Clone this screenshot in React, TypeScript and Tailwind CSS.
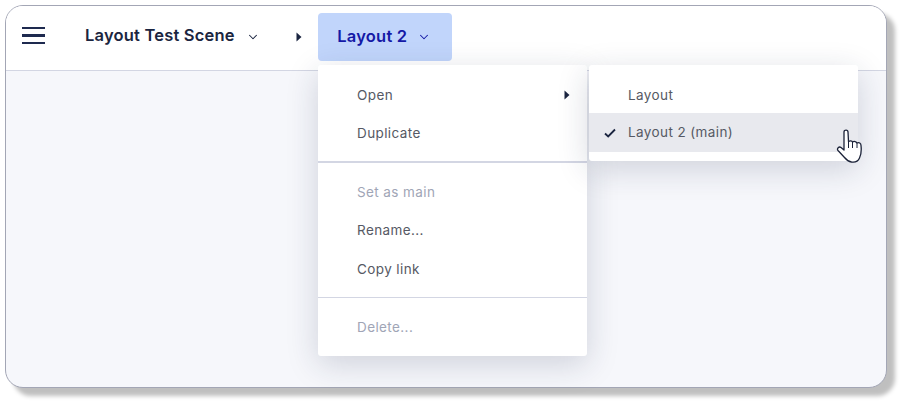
import { ChevronDown } from "lucide-react";

const font = { fontFamily: "Inter, 'Noto Sans', sans-serif" };

function Caret({ className }: { className: string }) {
  return (
    <svg width="6" height="10" viewBox="0 0 6 10" className={className}>
      <path d="M0.5 0.5 L5.5 5 L0.5 9.5 Z" fill="currentColor" />
    </svg>
  );
}

function Item({
  label,
  disabled,
  height = "h-[38px]",
  children,
}: {
  label: string;
  disabled?: boolean;
  height?: string;
  children?: React.ReactNode;
}) {
  return (
    <div
      className={
        "flex items-center justify-between pl-[39px] pr-[17px] text-[13.5px] tracking-[0.4px] " +
        height +
        " " +
        (disabled ? "text-[#a0a5b6]" : "text-[#565964]")
      }
    >
      <span>{label}</span>
      {children}
    </div>
  );
}

function HandCursor() {
  return (
    <svg width="26" height="36" viewBox="0 0 26 36" className="absolute left-[836px] top-[128px]">
      <path
        d="M8 4C8 1.500 12 1.500 12 4L12.500 13.500C14 12.500 16 12.500 16.500 14C18 13 20.500 13.500 21 15C23 14 25 15 25 17.500C25.500 22 25 27 23.500 30C22 33.500 19 34.500 15.500 34C12.500 33.500 10.500 32 8.500 29.500L2 22.500C.5 20.500 3 18 5 19.500L8 22Z"
        fill="#fff"
        stroke="#1b2238"
        strokeWidth="1.300"
        strokeLinejoin="round"
      />
      <path d="M12.500 13.500V20M16.500 14V20M21 15V20" stroke="#1b2238" strokeWidth="1" fill="none" />
    </svg>
  );
}

export default function App() {
  return (
    <div className="relative h-[403px] w-[902px] overflow-hidden bg-white pl-[5px] pt-[5px]" style={font}>
      <div className="flex h-[383px] w-[882px] flex-col overflow-hidden rounded-[18px] border border-[#a3a6b5] bg-[#f6f7fb] shadow-[8px_8px_4px_rgba(0,0,0,0.25)]">
        <header className="flex h-[65px] shrink-0 items-center border-b border-[#d3d6e3] bg-white pb-[2px]">
          <div className="mb-[3px] ml-[16px] flex w-[23px] flex-col gap-[5px]">
            <div className="h-[2.500px] bg-[#1e2a4f]" />
            <div className="h-[2.500px] bg-[#1e2a4f]" />
            <div className="h-[2.500px] bg-[#1e2a4f]" />
          </div>
          <span className="mb-[3px] ml-[40px] text-[16.500px] font-semibold leading-none tracking-[0.2px] text-[#1b2540]">
            Layout Test Scene
          </span>
          <ChevronDown size={14} strokeWidth={1.800} className="ml-[11px] text-[#1b2540]" />
          <Caret className="ml-[36px] text-[#1b2540]" />
          <div className="ml-[16px] flex h-[48px] w-[134px] items-center rounded-[4px] bg-[#c1d5fb] pl-[19.500px] text-[#1419a6]">
            <span className="mb-[2px] text-[16.500px] font-semibold leading-none tracking-[0.2px]">Layout 2</span>
            <ChevronDown size={14} strokeWidth={1.800} className="ml-[10px]" />
          </div>
        </header>
      </div>

      <div className="absolute left-[318px] top-[65px] w-[269px] rounded-[3px] bg-white pt-[11px] shadow-[0_8px_32px_rgba(30,40,70,0.18)]">
        <Item label="Open">
          <Caret className="text-[#1b2540]" />
        </Item>
        <Item label="Duplicate" />
        <div className="mt-[9px] h-[2px] bg-[#d3d6e3]" />
        <div className="pt-[10px]">
          <Item label="Set as main" disabled />
          <Item label="Rename..." />
          <Item label="Copy link" height="h-[39px] pt-[1px]" />
        </div>
        <div className="mt-[9px] h-px bg-[#d3d6e3]" />
        <div className="pb-[10px] pt-[10px]">
          <Item label="Delete..." disabled />
        </div>
      </div>

      <div className="absolute left-[589px] top-[65px] w-[269px] rounded-[3px] bg-white pb-[9px] pt-[12px] shadow-[0_8px_32px_rgba(30,40,70,0.18)]">
        <Item label="Layout" height="h-[36px]" />
        <div className="relative bg-[#e8e9ee]">
          <svg width="12" height="10" viewBox="0 0 12 10" className="absolute left-[15px] top-[15px]">
            <path d="M1 5.500 L4.200 8.500 L11 1.500" fill="none" stroke="#1b2540" strokeWidth="1.800" />
          </svg>
          <Item label="Layout 2 (main)" height="h-[39px]" />
        </div>
      </div>

      <HandCursor />
    </div>
  );
}
